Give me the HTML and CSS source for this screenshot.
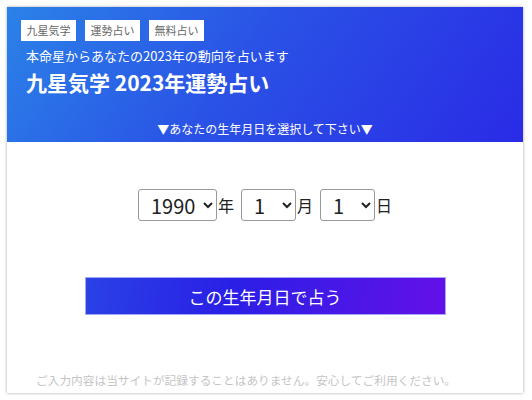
FILE: index.html
```html
<!DOCTYPE html>
<html lang="ja">
<head>
<meta charset="utf-8">
<link rel="stylesheet" href="styles.css">
</head>
<body>
<div class="card">
  <div class="header">
    <div class="tags">
      <span class="tag">九星気学</span>
      <span class="tag">運勢占い</span>
      <span class="tag">無料占い</span>
    </div>
    <p class="sub">本命星からあなたの2023年の動向を占います</p>
    <h1 class="title">九星気学 2023年運勢占い</h1>
    <p class="guide">▼あなたの生年月日を選択して下さい▼</p>
  </div>
  <div class="form">
    <div class="selects">
      <select class="sel sel-year"><option>1990</option></select><span class="unit">年</span>
      <select class="sel sel-small"><option>1</option></select><span class="unit">月</span>
      <select class="sel sel-small"><option>1</option></select><span class="unit">日</span>
    </div>
    <button class="btn">この生年月日で占う</button>
    <p class="note">ご入力内容は当サイトが記録することはありません。安心してご利用ください。</p>
  </div>
</div>
</body>
</html>
```
FILE: styles.css
```css
* { box-sizing: border-box; }
html, body { margin: 0; padding: 0; background: #fff; }
body {
  padding: 7px 9px 7px 7px;
  font-family: "Noto Sans CJK JP", "Noto Sans", sans-serif;
}
.card {
  width: 516px;
  height: 386px;
  background: #fff;
  box-shadow: 0 0 3px rgba(0,0,0,0.35);
  overflow: hidden;
}
.header {
  height: 135px;
  padding: 13px 14px 0;
  background: linear-gradient(125deg, #2b82e8 0%, #2a52e6 45%, #2a2be6 100%);
  color: #fff;
}
.tags { display: flex; gap: 9px; height: 21px; }
.tag {
  background: #fff;
  color: #666;
  font-size: 11px;
  line-height: 21px;
  padding: 0 5.5px;
}
.sub {
  margin: 6px 0 0;
  padding-left: 5px;
  font-size: 13px;
  line-height: 18px;
}
.title {
  margin: 4px 0 0;
  padding-left: 5px;
  font-size: 21px;
  line-height: 26px;
  font-weight: bold;
}
.guide {
  margin: 25px 0 0;
  text-align: center;
  font-size: 12px;
  line-height: 18px;
}
.form { display: flex; flex-direction: column; align-items: center; }
.selects {
  margin-top: 47px;
  height: 32px;
  display: flex;
  align-items: center;
  color: #222;
}
.sel {
  height: 32px;
  font-size: 20px;
  font-family: "Noto Sans CJK JP", "Noto Sans", sans-serif;
  color: #222;
  background: #fff;
  border: 1px solid #999;
  border-radius: 3px;
  padding: 0 0 0 8px;
}
.sel-year { width: 79px; }
.sel-small { width: 55px; }
.unit { font-size: 16px; margin: 0 7px 0 1px; }
.unit:last-child { margin-right: 0; }
.btn {
  margin-top: 56px;
  width: 361px;
  height: 38px;
  border: 1px solid #a3aaf2;
  background: linear-gradient(100deg, #2a42e6 0%, #2a1fe6 40%, #6410e8 100%);
  color: #fff;
  font-size: 17px;
  font-family: "Noto Sans CJK JP", "Noto Sans", sans-serif;
  padding: 0;
}
.note {
  margin: 57px 0 0;
  align-self: flex-start;
  padding-left: 29px;
  font-size: 11.7px;
  line-height: 16px;
  color: #c4c4c4;
}
```
